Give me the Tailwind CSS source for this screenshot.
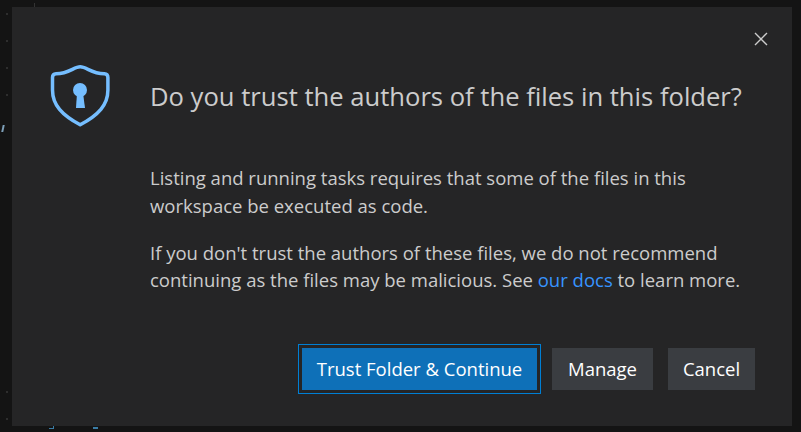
<!DOCTYPE html>
<html lang="en">
<head>
  <meta charset="UTF-8" />
  <title>Trust Folder</title>
  <script src="https://cdn.jsdelivr.net/npm/@tailwindcss/browser@4"></script>
</head>
<body class="bg-[#141414] overflow-hidden h-[432px] w-[801px] relative font-['Open_Sans','Noto_Sans',sans-serif]">
  <!-- editor bits behind the dialog -->
  <div class="absolute left-[6px] top-[13px] w-[2px] h-[2px] bg-[#2e2e2e]"></div>
  <div class="absolute left-[6px] top-[40px] w-[2px] h-[2px] bg-[#2e2e2e]"></div>
  <div class="absolute left-[6px] top-[67px] w-[2px] h-[2px] bg-[#2e2e2e]"></div>
  <div class="absolute left-[6px] top-[94px] w-[2px] h-[2px] bg-[#2e2e2e]"></div>
  <div class="absolute left-[6px] top-[391px] w-[2px] h-[2px] bg-[#2e2e2e]"></div>
  <div class="absolute left-[6px] top-[418px] w-[2px] h-[2px] bg-[#2e2e2e]"></div>
  <div class="absolute left-[34px] top-[3px] w-px h-[4px] bg-[#333]"></div>
  <div class="absolute left-[2px] top-[125px] w-[2px] h-[7px] bg-[#7d9fb8] -skew-x-12"></div>
  <div class="absolute left-[49px] top-[426px] w-[5px] h-[3px] border-b border-r border-[#3a7ca5]"></div>
  <div class="absolute left-[93px] top-[426px] w-[5px] h-[3px] border-b-2 border-[#3a7ca5]"></div>

  <!-- Dialog -->
  <div class="absolute left-[12px] top-[7px] w-[780px] h-[419px] bg-[#252526] flex flex-col">
    <div class="flex justify-end pt-[24px] pr-[23px] h-[42px]">
      <svg width="16" height="16" viewBox="0 0 16 16" fill="none" stroke="#cccccc" stroke-width="1.4"><path d="M2 2l12 12M14 2L2 14"/></svg>
    </div>
    <div class="flex flex-1 pl-[38px] pr-[40px]">
      <svg class="mt-[14px] shrink-0" width="62" height="66" viewBox="0 0 62 66">
        <path d="M30.200 3.800C24 3.800 19 10.500 6 10.800C3.500 10.900 2.500 12 2.500 14.500V27C2.500 42 12 52 30.200 61.800C48.400 52 57.900 42 57.900 27V14.500C57.900 12 56.900 10.900 54.400 10.800C41.400 10.500 36.400 3.800 30.200 3.800Z" fill="none" stroke="#75beff" stroke-width="3.500" stroke-linejoin="round"/>
        <circle cx="30" cy="27" r="7" fill="#75beff"/>
        <path d="M27 30h6l2 15h-9z" fill="#75beff"/>
      </svg>
      <div class="ml-[38px] flex flex-col">
        <h1 class="mt-[32px] text-[25.600px] leading-[32px] text-[#cccccc] whitespace-nowrap">Do you trust the authors of the files in this folder?</h1>
        <p class="mt-[51px] text-[18.500px] leading-[27.500px] text-[#cccccc] whitespace-nowrap">Listing and running tasks requires that some of the files in this<br />workspace be executed as code.</p>
        <p class="mt-[19.500px] text-[18.500px] leading-[27.500px] text-[#cccccc] whitespace-nowrap">If you don't trust the authors of these files, we do not recommend<br />continuing as the files may be malicious. See <a href="#" class="text-[#3794ff]">our docs</a> to learn more.</p>
      </div>
    </div>
    <div class="flex justify-end items-center gap-[15px] pr-[37px] pb-[36px]">
      <button class="h-[42px] w-[235px] bg-[#0e70b8] text-white text-[18.500px] outline outline-1 outline-offset-[3px] outline-[#007fd4]">Trust Folder &amp; Continue</button>
      <button class="h-[42px] w-[101px] bg-[#3a3d41] text-white text-[18.500px]">Manage</button>
      <button class="h-[42px] w-[87px] bg-[#3a3d41] text-white text-[18.500px]">Cancel</button>
    </div>
  </div>
</body>
</html>
